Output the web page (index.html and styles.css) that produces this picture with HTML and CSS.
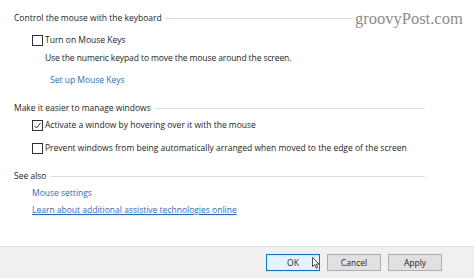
FILE: index.html
```html
<!DOCTYPE html>
<html lang="en">
<head>
    <meta charset="UTF-8">
    <title>Ease of Access - Mouse</title>
    <link rel="stylesheet" href="styles.css">
</head>
<body>
    <div class="page">
        <div class="content">
            <div class="section-title">Control the mouse with the keyboard</div>
            <label class="check-row row-first">
                <span class="box"></span>
                Turn on Mouse Keys
            </label>
            <p class="desc">Use the numeric keypad to move the mouse around the screen.</p>
            <a class="link link-setup" href="#">Set up Mouse Keys</a>

            <div class="section-title gap-big">Make it easier to manage windows</div>
            <label class="check-row row-tight">
                <span class="box checked">
                    <svg width="9" height="9" viewBox="0 0 9 9"><path d="M1.5 4.8 L3.6 7 L7.6 1.8" fill="none" stroke="#333" stroke-width="1"/></svg>
                </span>
                Activate a window by hovering over it with the mouse
            </label>
            <label class="check-row row-wide">
                <span class="box"></span>
                Prevent windows from being automatically arranged when moved to the edge of the screen
            </label>

            <div class="section-title gap-big">See also</div>
            <a class="link link-also" href="#">Mouse settings</a>
            <a class="link link-also underline" href="#">Learn about additional assistive technologies online</a>
        </div>
        <div class="footer">
            <button class="btn btn-default">OK</button>
            <button class="btn">Cancel</button>
            <button class="btn">Apply</button>
        </div>
    </div>

    <div class="watermark">groovyPost.com</div>

    <svg class="cursor" width="8" height="12" viewBox="0 0 8 12">
        <path d="M0.5 0.5 L0.5 9.5 L2.6 7.6 L4.2 11.2 L5.6 10.6 L4.1 7.1 L7 7.1 Z" fill="#fff" stroke="#222" stroke-width="0.8"/>
    </svg>
</body>
</html>
```

FILE: styles.css
```css
body {
    margin: 0;
    padding: 0;
    background-color: #fff;
    font-family: "Open Sans", "Noto Sans", sans-serif;
    font-size: 8.5px;
    color: #1e1e1e;
}
.page {
    display: flex;
    flex-direction: column;
    height: 278px;
}
.content {
    flex: 1;
    display: flex;
    flex-direction: column;
    align-items: flex-start;
    padding: 12px 0 0 14px;
    width: 411px;
}
.section-title {
    display: flex;
    align-items: center;
    width: 100%;
    height: 12px;
    line-height: 12px;
}
.section-title::after {
    content: "";
    flex: 1;
    margin-left: 4px;
    border-top: 1px solid #dcdcdc;
}
.gap-big {
    margin-top: 16px;
}
.check-row {
    display: flex;
    align-items: center;
    height: 12px;
    line-height: 12px;
    margin-left: 18px;
}
.row-first {
    margin-top: 10px;
}
.row-tight {
    margin-top: 5px;
}
.row-wide {
    margin-top: 11px;
}
.box {
    display: inline-flex;
    align-items: center;
    justify-content: center;
    width: 9px;
    height: 9px;
    border: 1px solid #333;
    background-color: #fff;
    margin-right: 2px;
}
.desc {
    margin: 6px 0 0 31px;
    height: 12px;
    line-height: 12px;
    letter-spacing: -0.1px;
}
.link {
    color: #1f6fc2;
    text-decoration: none;
    height: 12px;
    line-height: 12px;
}
.link-setup {
    margin: 10px 0 0 36px;
}
.link-also {
    margin: 5px 0 0 18px;
}
.underline {
    text-decoration: underline;
}
.footer {
    background-color: #f0f0f0;
    border-top: 1px solid #dfdfdf;
    display: flex;
    justify-content: flex-end;
    align-items: flex-start;
    gap: 7px;
    padding: 7px 32px 0 0;
    box-sizing: border-box;
    height: 32px;
}
.btn {
    width: 54px;
    height: 17px;
    padding: 0;
    font-family: "Open Sans", "Noto Sans", sans-serif;
    font-size: 8.5px;
    color: #1e1e1e;
    background-color: #e1e1e1;
    border: 1px solid #adadad;
}
.btn-default {
    background-color: #e5f1fb;
    border-color: #0078d7;
}
.watermark {
    position: absolute;
    top: 10px;
    left: 353px;
    padding: 0 2px;
    background-color: #fff;
    font-family: "Liberation Serif", serif;
    font-size: 16.5px;
    line-height: 18px;
    color: #8c8c8c;
}
.cursor {
    position: absolute;
    left: 312px;
    top: 257px;
}
```
